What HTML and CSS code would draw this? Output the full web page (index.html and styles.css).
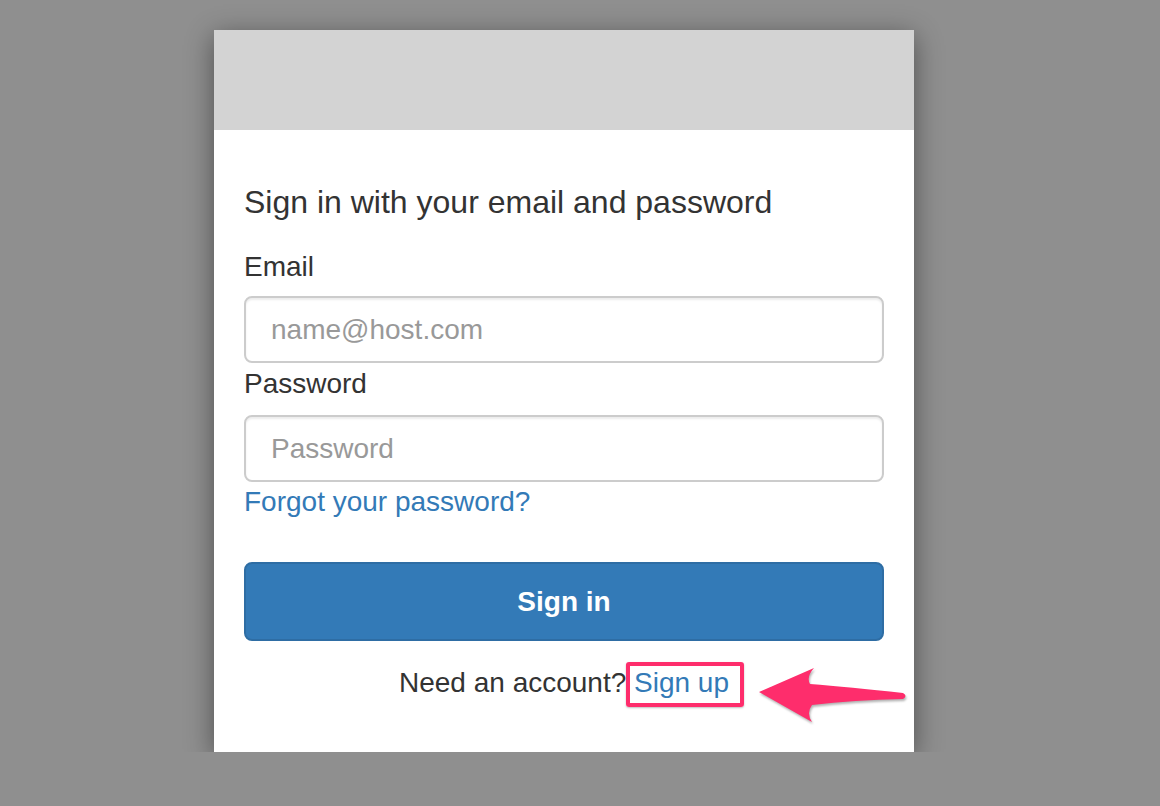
FILE: index.html
```html
<!DOCTYPE html>
<html lang="en">
<head>
    <meta charset="UTF-8">
    <meta name="viewport" content="width=device-width, initial-scale=1.0">
    <title>Sign in</title>
    <link rel="stylesheet" href="styles.css">
</head>
<body>
    <div class="card">
        <div class="banner"></div>

        <form class="signin" onsubmit="return false;">
            <h1>Sign in with your email and password</h1>

            <label for="email">Email</label>
            <input id="email" type="email" placeholder="name@host.com">

            <label for="password" class="second">Password</label>
            <input id="password" type="password" placeholder="Password">

            <a href="#" class="forgot">Forgot your password?</a>

            <button type="submit" class="submit">Sign in</button>

            <p class="signup">Need an account? <span class="highlight"><a href="#">Sign up</a></span></p>
        </form>

        <!-- annotation arrow pointing at the sign up link -->
        <svg class="arrow" width="180" height="80" viewBox="0 0 180 80">
            <path d="M15 34 L70 10 Q62 19 66 26 Q105 29 159 35 Q164 38 159 41 Q110 42 68 47 Q62 55 68 64 Z"></path>
        </svg>
    </div>
</body>
</html>
```

FILE: styles.css
```css
body {
    margin: 0;
    padding: 30px 0 0 214px;
    background-color: #8f8f8f;
    font-family: "Liberation Sans", Arial, sans-serif;
    color: #333;
}
.card {
    position: relative;
    width: 700px;
    background-color: white;
    box-shadow: 0 6px 26px rgba(0, 0, 0, 0.45);
}
.banner {
    height: 100px;
    background-color: #d3d3d3;
}
.signin {
    padding: 54px 30px 53px;
}
.signin h1 {
    margin: 0 0 30px;
    font-size: 32px;
    font-weight: normal;
    line-height: normal;
    color: #333;
}
.signin label {
    display: block;
    font-size: 28px;
    margin-bottom: 13px;
}
.signin label.second {
    margin-top: 5px;
    margin-bottom: 15px;
}
.signin input {
    display: block;
    box-sizing: border-box;
    width: 100%;
    height: 67px;
    padding: 0 25px;
    border: 2px solid #ccc;
    border-radius: 8px;
    box-shadow: inset 0 2px 2px rgba(0, 0, 0, 0.075);
    font-family: inherit;
    font-size: 28px;
    color: #555;
    outline: none;
}
.signin input::placeholder {
    color: #999;
}
.forgot {
    display: inline-block;
    margin-top: 4px;
    font-size: 28px;
    color: #337ab7;
    text-decoration: none;
}
.submit {
    display: block;
    width: 100%;
    height: 79px;
    margin-top: 44px;
    padding: 0;
    background-color: #337ab7;
    border: 2px solid #2e6da4;
    border-radius: 8px;
    color: white;
    font-family: inherit;
    font-size: 28px;
    font-weight: bold;
    cursor: pointer;
}
.signup {
    margin: 26px 0 0;
    text-align: center;
    font-size: 28px;
}
.signup a {
    color: #337ab7;
    text-decoration: none;
}
.highlight {
    position: relative;
}
.highlight::after {
    content: "";
    position: absolute;
    left: -8px;
    top: -5px;
    width: 118px;
    height: 45px;
    box-sizing: border-box;
    border: 4px solid #fe2d6c;
    border-radius: 3px;
    box-shadow: 0 1px 2px rgba(0, 0, 0, 0.25);
}
.arrow {
    position: absolute;
    left: 530px;
    top: 628px;
    overflow: visible;
    filter: drop-shadow(1px 2px 1px rgba(0, 0, 0, 0.3));
}
.arrow path {
    fill: #fe2d6c;
}
```
